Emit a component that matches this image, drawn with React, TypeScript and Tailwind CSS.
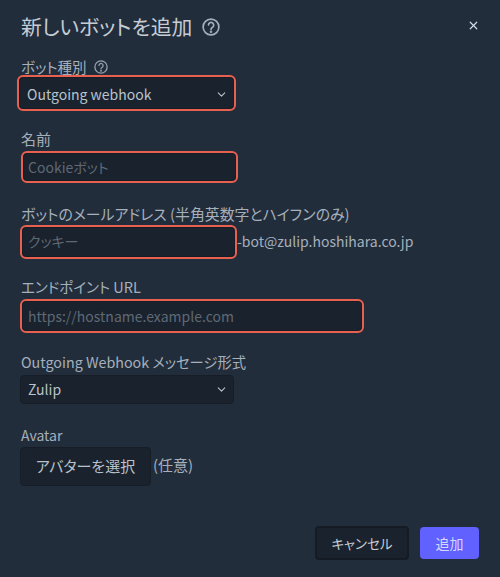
import { ChevronDown, X } from "lucide-react";

function Help({ size, cls }: { size: number; cls: string }) {
  return (
    <svg width={size} height={size} viewBox="0 0 24 24" fill="none" stroke="currentColor" strokeWidth="2.2" strokeLinecap="round" className={cls}>
      <circle cx="12" cy="12" r="10.5" />
      <path d="M8.6 9.4a3.5 3.5 0 1 1 5.4 3c-1.3.8-2 1.4-2 2.8" />
      <circle cx="12" cy="18.4" r="0.6" fill="currentColor" />
    </svg>
  );
}

export default function App() {
  return (
    <div
      className="w-[500px] h-[577px] bg-[#222d3c] text-[14px] text-[#a6b0bb] overflow-hidden flex flex-col [font-feature-settings:'palt']"
      style={{ fontFamily: '"Noto Sans CJK JP", sans-serif' }}
    >
      <div className="h-[52px] pl-[21px] pr-[20px] pt-[11px] flex items-start justify-between">
        <div className="flex items-center h-[30px]">
          <span className="text-[20.8px] leading-[30px] text-[#c5ccd4]">新しいボットを追加</span>
          <Help size={18} cls="ml-[10px] mt-[1px] text-[#a6b0bb]" />
        </div>
        <X size={13} strokeWidth={2.2} className="mt-[8px] text-[#d5dbe2]" />
      </div>

      <div className="pl-[21px] flex flex-col">
        <div className="h-[23px] pt-[6px] flex items-center leading-[20px] text-[14.5px]">
          <span>ボット種別</span>
          <Help size={14} cls="ml-[7px] mt-[1px] text-[#97a2ae]" />
        </div>
        <div className="-ml-[4px] w-[219px] h-[36px] rounded-[6px] border-2 border-[#e8604f] bg-[#1a222d] shadow-[inset_0_0_0_1px_#161d26] pl-[8px] pr-[6px] pt-[2px] flex items-center justify-between text-[#b9c2cc]">
          <span>Outgoing webhook</span>
          <ChevronDown size={13} strokeWidth={2} />
        </div>

        <div className="mt-[18px] h-[20px] leading-[20px] text-[15px]">名前</div>
        <div className="mt-[2px] w-[217px] h-[32px] rounded-[6px] border-2 border-[#e8604f] bg-[#1a222d] shadow-[inset_0_0_0_1px_#161d26] px-[5px] flex items-center text-[#5f6975]">
          Cookieボット
        </div>

        <div className="mt-[21px] h-[20px] leading-[20px] text-[14.9px]">ボットのメールアドレス (半角英数字とハイフンのみ)</div>
        <div className="flex items-center mt-[1px] -ml-[1px] h-[34px]">
          <div className="w-[217px] h-[34px] rounded-[6px] border-2 border-[#e8604f] bg-[#1a222d] shadow-[inset_0_0_0_1px_#161d26] px-[6px] pb-[1px] flex items-center text-[#5f6975]">
            クッキー
          </div>
          <span className="-mt-[1px]">-bot@zulip.hoshihara.co.jp</span>
        </div>

        <div className="mt-[18px] h-[20px] leading-[20px] text-[14.5px]">エンドポイント URL</div>
        <div className="mt-[2px] -ml-[1px] w-[344px] h-[34px] rounded-[6px] border-2 border-[#e8604f] bg-[#1a222d] shadow-[inset_0_0_0_1px_#161d26] px-[6px] flex items-center text-[#5f6975]">
          https://hostname.example.com
        </div>

        <div className="mt-[19px] h-[20px] leading-[20px] text-[14.3px]">Outgoing Webhook メッセージ形式</div>
        <div className="mt-[3px] -ml-[1px] w-[214px] h-[29px] rounded-[4px] border border-[#161d26] bg-[#1a222d] pl-[7px] pr-[5px] flex items-center justify-between text-[#b9c2cc]">
          <span>Zulip</span>
          <ChevronDown size={13} strokeWidth={2} />
        </div>

        <div className="mt-[21px] h-[20px] leading-[20px]">Avatar</div>
        <div className="mt-[2px] -ml-[1px] flex items-center">
          <div className="w-[131px] h-[39px] rounded-[4px] border border-[#161d26] bg-[#1a222d] flex items-center justify-center text-[15px] text-[#b9c2cc]">
            アバターを選択
          </div>
          <span className="ml-[2px] -mt-[3px] text-[15px]">(任意)</span>
        </div>
      </div>

      <div className="flex justify-end items-center pr-[21px] mt-[40px]">
        <div className="w-[94px] h-[34px] rounded-[4px] border-2 border-[#141b24] bg-[#1a222d] flex items-center justify-center text-[13.5px] text-[#c5ccd4]">
          キャンセル
        </div>
        <div className="ml-[11px] w-[59px] h-[32px] rounded-[4px] bg-[#6161ff] flex items-center justify-center text-[14px] text-[#d6d6ff]">
          追加
        </div>
      </div>
    </div>
  );
}
